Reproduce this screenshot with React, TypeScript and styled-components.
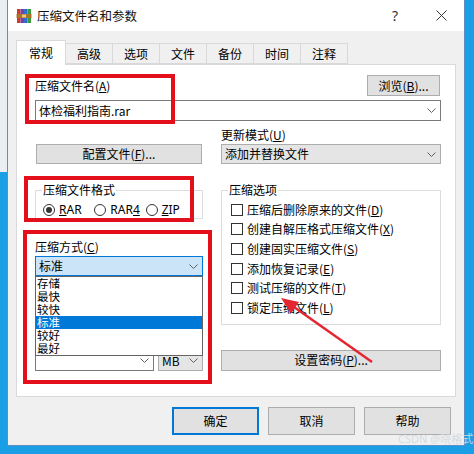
import React from 'react';
import styled, { createGlobalStyle } from 'styled-components';

const Global = createGlobalStyle`
  html, body { margin: 0; padding: 0; }
  body {
    width: 474px;
    height: 454px;
    overflow: hidden;
    background: linear-gradient(#e9eef2, #e9eef2) 0 0 / 7px 172px no-repeat, #1a9fe6;
    font-family: "Noto Sans CJK SC", "Noto Sans", sans-serif;
    font-size: 12px;
    color: #000;
  }
  * { box-sizing: border-box; }
`;

const Page = styled.div`
  position: relative;
  width: 474px;
  height: 454px;
`;

const Window = styled.div`
  margin-left: 7px;
  width: 458px;
  height: 446px;
  background: #f0f0f0;
  border: 1px solid #5b8fbf;
  border-top: none;
  display: flex;
  flex-direction: column;
`;

const TitleBar = styled.div`
  height: 31px;
  flex: none;
  background: #fff;
  display: flex;
  align-items: center;
  padding-left: 8px;
`;

const TitleText = styled.span`
  margin-left: 5px;
  font-size: 12.5px;
  line-height: 16px;
  color: #111;
  flex: 1;
`;

const TitleButton = styled.div`
  width: 46px;
  height: 31px;
  display: flex;
  align-items: center;
  justify-content: center;
  font-family: "Noto Sans", sans-serif;
  font-size: 14px;
  color: #333;
`;

const Body = styled.div`
  padding: 9px 8px 0 8px;
  display: flex;
  flex-direction: column;
`;

const TabRow = styled.div`
  height: 24px;
  display: flex;
  align-items: flex-end;
  position: relative;
  z-index: 1;
`;

const Tab = styled.div<{ $active?: boolean }>`
  width: ${p => (p.$active ? 50 : 48)}px;
  height: ${p => (p.$active ? 25 : 21)}px;
  margin-bottom: ${p => (p.$active ? -1 : 0)}px;
  background: ${p => (p.$active ? '#fff' : '#f0f0f0')};
  border: 1px solid #d9d9d9;
  border-bottom: ${p => (p.$active ? 'none' : '1px solid #d9d9d9')};
  margin-left: ${p => (p.$active ? 0 : -1)}px;
  display: flex;
  align-items: center;
  justify-content: center;
  padding-top: ${p => (p.$active ? 0 : 1)}px;
  font-size: 12px;
  line-height: 14px;
`;

const Panel = styled.div`
  width: 440px;
  height: 333px;
  background: #fff;
  border: 1px solid #d9d9d9;
  padding: 10px 14px 0 18px;
  display: flex;
  flex-direction: column;
`;

const LabelRow = styled.div`
  height: 21px;
  display: flex;
  align-items: center;
  justify-content: space-between;
`;

const Label = styled.div<{ $mt?: number }>`
  line-height: 14px;
  margin-top: ${p => p.$mt ?? 0}px;
  white-space: nowrap;
`;

type ComboKind = 'edit' | 'readonly' | 'focused';
const Combo = styled.div<{ $kind: ComboKind; $h?: number; $w?: number; $mt?: number }>`
  height: ${p => p.$h ?? 20}px;
  margin-top: ${p => p.$mt ?? 0}px;
  ${p => (p.$w ? `width:${p.$w}px; flex:none;` : '')}
  display: flex;
  align-items: center;
  justify-content: space-between;
  padding: 0 4px 0 3px;
  border: 1px solid ${p => (p.$kind === 'edit' ? '#7a7a7a' : p.$kind === 'focused' ? '#0078d7' : '#adadad')};
  background: ${p => (p.$kind === 'edit' ? '#fff' : p.$kind === 'focused' ? '#cce4f7' : '#e5e5e5')};
  line-height: 14px;
  white-space: nowrap;
`;

const Button = styled.div<{ $h?: number; $w?: number; $mt?: number; $default?: boolean; $mx?: number }>`
  height: ${p => p.$h ?? 21}px;
  ${p => (p.$w ? `width:${p.$w}px; flex:none;` : '')}
  margin-top: ${p => p.$mt ?? 0}px;
  margin-left: ${p => p.$mx ?? 0}px;
  margin-right: ${p => p.$mx ?? 0}px;
  background: #e1e1e1;
  border: 1px solid ${p => (p.$default ? '#0078d7' : '#adadad')};
  box-shadow: ${p => (p.$default ? 'inset 0 0 0 1px #0078d7' : 'none')};
  display: flex;
  align-items: center;
  justify-content: center;
  line-height: 14px;
  white-space: nowrap;
`;

const Columns = styled.div`
  margin-top: 7px;
  display: grid;
  grid-template-columns: 168px 220px;
  column-gap: 18px;
`;

const Column = styled.div`
  display: flex;
  flex-direction: column;
`;

const Group = styled.fieldset<{ $mt?: number }>`
  margin: ${p => p.$mt ?? 0}px 0 0 0;
  min-width: 0;
  border: 1px solid #dcdcdc;
  padding: 0 6px 0 6px;
`;

const GroupTitle = styled.legend`
  padding: 0 1px;
  font-size: 12px;
  line-height: 16px;
`;

const RadioRow = styled.div`
  margin-top: 6px;
  margin-bottom: 2px;
  height: 12px;
  display: flex;
  align-items: center;
`;

const RadioItem = styled.div`
  width: 55px;
  display: flex;
  align-items: center;
  gap: 4px;
  margin-left: 1px;
  font-family: "Noto Sans", sans-serif;
  font-size: 12px;
  line-height: 12px;
`;

const RadioCircle = styled.span<{ $on?: boolean }>`
  width: 12px;
  height: 12px;
  flex: none;
  border-radius: 50%;
  border: 1px solid #333;
  background: #fff;
  display: flex;
  align-items: center;
  justify-content: center;
  &::after {
    content: '';
    width: 6px;
    height: 6px;
    border-radius: 50%;
    background: ${p => (p.$on ? '#333' : 'transparent')};
  }
`;

const CheckList = styled.div`
  padding: 2px 0 6px 0;
  display: flex;
  flex-direction: column;
`;

const CheckRow = styled.div`
  height: 19.6px;
  display: flex;
  align-items: center;
  gap: 4px;
  padding-left: 3px;
  line-height: 14px;
  white-space: nowrap;
`;

const CheckBox = styled.span`
  width: 12px;
  height: 12px;
  flex: none;
  border: 1px solid #333;
  background: #fff;
`;

const DropWrap = styled.div`
  position: relative;
  margin-top: 2px;
  z-index: 2;
`;

const DropList = styled.div`
  position: absolute;
  top: 100%;
  left: 0;
  width: 168px;
  height: 80px;
  background: #fff;
  border: 1px solid #646464;
  display: flex;
  flex-direction: column;
`;

const DropItem = styled.div<{ $sel?: boolean }>`
  height: 13px;
  line-height: 13px;
  padding-left: 1px;
  font-size: 11.5px;
  background: ${p => (p.$sel ? '#0078d7' : 'transparent')};
  color: ${p => (p.$sel ? '#fff' : '#000')};
`;

const DictRow = styled.div`
  margin-top: 74px;
  display: flex;
  gap: 4px;
`;

const Footer = styled.div`
  margin-top: 10px;
  display: flex;
  justify-content: flex-end;
  gap: 9px;
  padding-right: 5px;
`;

const Overlay = styled.div`
  position: absolute;
  inset: 0;
  pointer-events: none;
`;

const RedBox = styled.div<{ $x: number; $y: number; $w: number; $h: number }>`
  position: absolute;
  left: ${p => p.$x}px;
  top: ${p => p.$y}px;
  width: ${p => p.$w}px;
  height: ${p => p.$h}px;
  border: 4px solid #e3101b;
`;

const Watermark = styled.div`
  position: absolute;
  left: 398px;
  top: 432px;
  font-size: 11px;
  line-height: 13px;
  color: rgba(210, 218, 224, 0.95);
  font-family: "Noto Sans", "Noto Sans CJK SC", sans-serif;
  white-space: nowrap;
`;

const Chevron = () => (
  <svg width="9" height="5" viewBox="0 0 9 5">
    <path d="M0.5 0.5 L4.5 4.5 L8.5 0.5" fill="none" stroke="#606060" strokeWidth="1" />
  </svg>
);

const RarIcon = () => (
  <svg width="16" height="16" viewBox="0 0 16 16">
    <rect x="1" y="1" width="3.5" height="14" fill="#d23b2b" />
    <rect x="4.5" y="1" width="3.5" height="14" fill="#7c3fa3" />
    <rect x="8" y="1" width="3.5" height="14" fill="#2e6fd1" />
    <rect x="11.5" y="1" width="3.5" height="14" fill="#3a9a3c" />
    <rect x="0.5" y="6" width="15" height="4" fill="#a9742f" />
    <rect x="6" y="6.5" width="4" height="3" fill="#e9c97a" />
  </svg>
);

const CloseIcon = () => (
  <svg width="11" height="11" viewBox="0 0 11 11">
    <path d="M0.5 0.5 L10.5 10.5 M10.5 0.5 L0.5 10.5" stroke="#333" strokeWidth="1" />
  </svg>
);

const tabs = ['常规', '高级', '选项', '文件', '备份', '时间', '注释'];
const options: [string, string][] = [
  ['压缩后删除原来的文件', 'D'],
  ['创建自解压格式压缩文件', 'X'],
  ['创建固实压缩文件', 'S'],
  ['添加恢复记录', 'E'],
  ['测试压缩的文件', 'T'],
  ['锁定压缩文件', 'L'],
];
const methods = ['存储', '最快', '较快', '标准', '较好', '最好'];

export default function App() {
  return (
    <Page>
      <Global />
      <Window>
        <TitleBar>
          <RarIcon />
          <TitleText>压缩文件名和参数</TitleText>
          <TitleButton>?</TitleButton>
          <TitleButton>
            <CloseIcon />
          </TitleButton>
        </TitleBar>
        <Body>
          <TabRow>
            {tabs.map((t, i) => (
              <Tab key={t} $active={i === 0}>
                {t}
              </Tab>
            ))}
          </TabRow>
          <Panel>
            <LabelRow>
              <Label>
                压缩文件名(<u>A</u>)
              </Label>
              <Button $w={73} $h={21} $mx={1}>
                浏览(<u>B</u>)...
              </Button>
            </LabelRow>
            <Combo $kind="edit" $h={21} $mt={4}>
              <span>体检福利指南.rar</span>
              <Chevron />
            </Combo>
            <Columns>
              <Column>
                <Button $h={20} $mt={16} $mx={1}>
                  配置文件(<u>F</u>)...
                </Button>
                <Group $mt={18}>
                  <GroupTitle>压缩文件格式</GroupTitle>
                  <RadioRow>
                    <RadioItem>
                      <RadioCircle $on />
                      <span>
                        <u>R</u>AR
                      </span>
                    </RadioItem>
                    <RadioItem>
                      <RadioCircle />
                      <span>
                        RAR<u>4</u>
                      </span>
                    </RadioItem>
                    <RadioItem>
                      <RadioCircle />
                      <span>
                        <u>Z</u>IP
                      </span>
                    </RadioItem>
                  </RadioRow>
                </Group>
                <Label $mt={21}>
                  压缩方式(<u>C</u>)
                </Label>
                <DropWrap>
                  <Combo $kind="focused" $h={20}>
                    <span>标准</span>
                    <Chevron />
                  </Combo>
                  <DropList>
                    {methods.map(m => (
                      <DropItem key={m} $sel={m === '标准'}>
                        {m}
                      </DropItem>
                    ))}
                  </DropList>
                </DropWrap>
                <DictRow>
                  <Combo $kind="edit" $h={21} $w={119}>
                    <span />
                    <Chevron />
                  </Combo>
                  <Combo $kind="readonly" $h={21} $w={45}>
                    <span>MB</span>
                    <Chevron />
                  </Combo>
                </DictRow>
              </Column>
              <Column>
                <Label>
                  更新模式(<u>U</u>)
                </Label>
                <Combo $kind="readonly" $h={20} $mt={2}>
                  <span>添加并替换文件</span>
                  <Chevron />
                </Combo>
                <Group $mt={18}>
                  <GroupTitle>压缩选项</GroupTitle>
                  <CheckList>
                    {options.map(([t, k]) => (
                      <CheckRow key={t}>
                        <CheckBox />
                        <span>
                          {t}(<u>{k}</u>)
                        </span>
                      </CheckRow>
                    ))}
                  </CheckList>
                </Group>
                <Button $h={21} $mt={25}>
                  设置密码(<u>P</u>)...
                </Button>
              </Column>
            </Columns>
          </Panel>
          <Footer>
            <Button $w={87} $h={28} $default>
              确定
            </Button>
            <Button $w={87} $h={28}>
              取消
            </Button>
            <Button $w={87} $h={28}>
              帮助
            </Button>
          </Footer>
        </Body>
      </Window>
      <Overlay>
        <RedBox $x={25} $y={74} $w={150} $h={50} />
        <RedBox $x={24} $y={176} $w={170} $h={46} />
        <RedBox $x={23} $y={230} $w={189} $h={154} />
        <svg width="474" height="454" viewBox="0 0 474 454">
          <line x1="372" y1="362" x2="294" y2="307" stroke="#e3262f" strokeWidth="2.5" />
          <polygon points="281,298 299,302 291,313.5" fill="#e3262f" />
        </svg>
        <Watermark>CSDN @晓格式</Watermark>
      </Overlay>
    </Page>
  );
}
